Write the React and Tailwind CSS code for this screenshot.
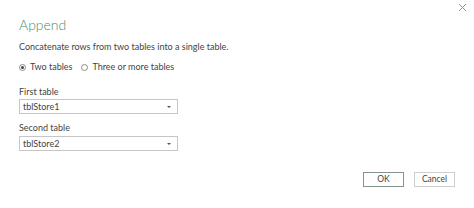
import { useState } from "react"

function Radio({ checked, label, onClick }) {
  return (
    <button onClick={onClick} className="flex items-center gap-[4px] text-[9px] text-[#444]">
      <span className="w-[7px] h-[7px] rounded-full border border-[#8a8a8a] flex items-center justify-center">
        {checked && <span className="w-[3px] h-[3px] rounded-full bg-[#444]" />}
      </span>
      <span>{label}</span>
    </button>
  )
}

function Select({ value }) {
  return (
    <div className="w-[159px] h-[15px] border border-[#c6c6c6] bg-white flex items-center justify-between pl-[3px] pr-[6px] text-[9px] text-[#444]">
      <span>{value}</span>
      <span className="w-0 h-0 border-l-[2px] border-r-[2px] border-t-[2px] border-l-transparent border-r-transparent border-t-[#555]" />
    </div>
  )
}

export default function App() {
  const [mode, setMode] = useState("two")

  return (
    <div
      className="relative w-[474px] h-[208px] bg-white flex flex-col pl-[19px] pt-[15px]"
      style={{ fontFamily: 'Lato, "Open Sans", sans-serif' }}
    >
      {/* close */}
      <button className="absolute right-[7px] top-[3px] w-[9px] h-[9px]" title="Close">
        <svg viewBox="0 0 9 9" className="w-[9px] h-[9px]">
          <path d="M1 1 L8 8 M8 1 L1 8" stroke="#888" strokeWidth="0.9" fill="none" />
        </svg>
      </button>

      <h1 className="text-[14px] leading-[20px] font-light text-[#4f8a63]">Append</h1>

      <p className="mt-[6px] text-[9px] leading-[12px] text-[#444]">
        Concatenate rows from two tables into a single table.
      </p>

      <div className="mt-[8px] flex items-center gap-[9px] leading-[12px]">
        <Radio checked={mode === "two"} label="Two tables" onClick={() => setMode("two")} />
        <Radio checked={mode === "more"} label="Three or more tables" onClick={() => setMode("more")} />
      </div>

      <label className="mt-[13px] text-[9px] leading-[12px] text-[#444]">First table</label>
      <div className="mt-[1px]">
        <Select value="tblStore1" />
      </div>

      <label className="mt-[8px] text-[9px] leading-[12px] text-[#444]">Second table</label>
      <div className="mt-[2px]">
        <Select value="tblStore2" />
      </div>

      <div className="mt-[21px] flex justify-end gap-[10px] pr-[19px]">
        <button className="w-[41px] h-[15px] border border-[#7e978a] text-[8.5px] text-[#444] bg-white">OK</button>
        <button className="w-[41px] h-[15px] border border-[#cfcfcf] text-[8.5px] text-[#444] bg-white">Cancel</button>
      </div>
    </div>
  )
}
